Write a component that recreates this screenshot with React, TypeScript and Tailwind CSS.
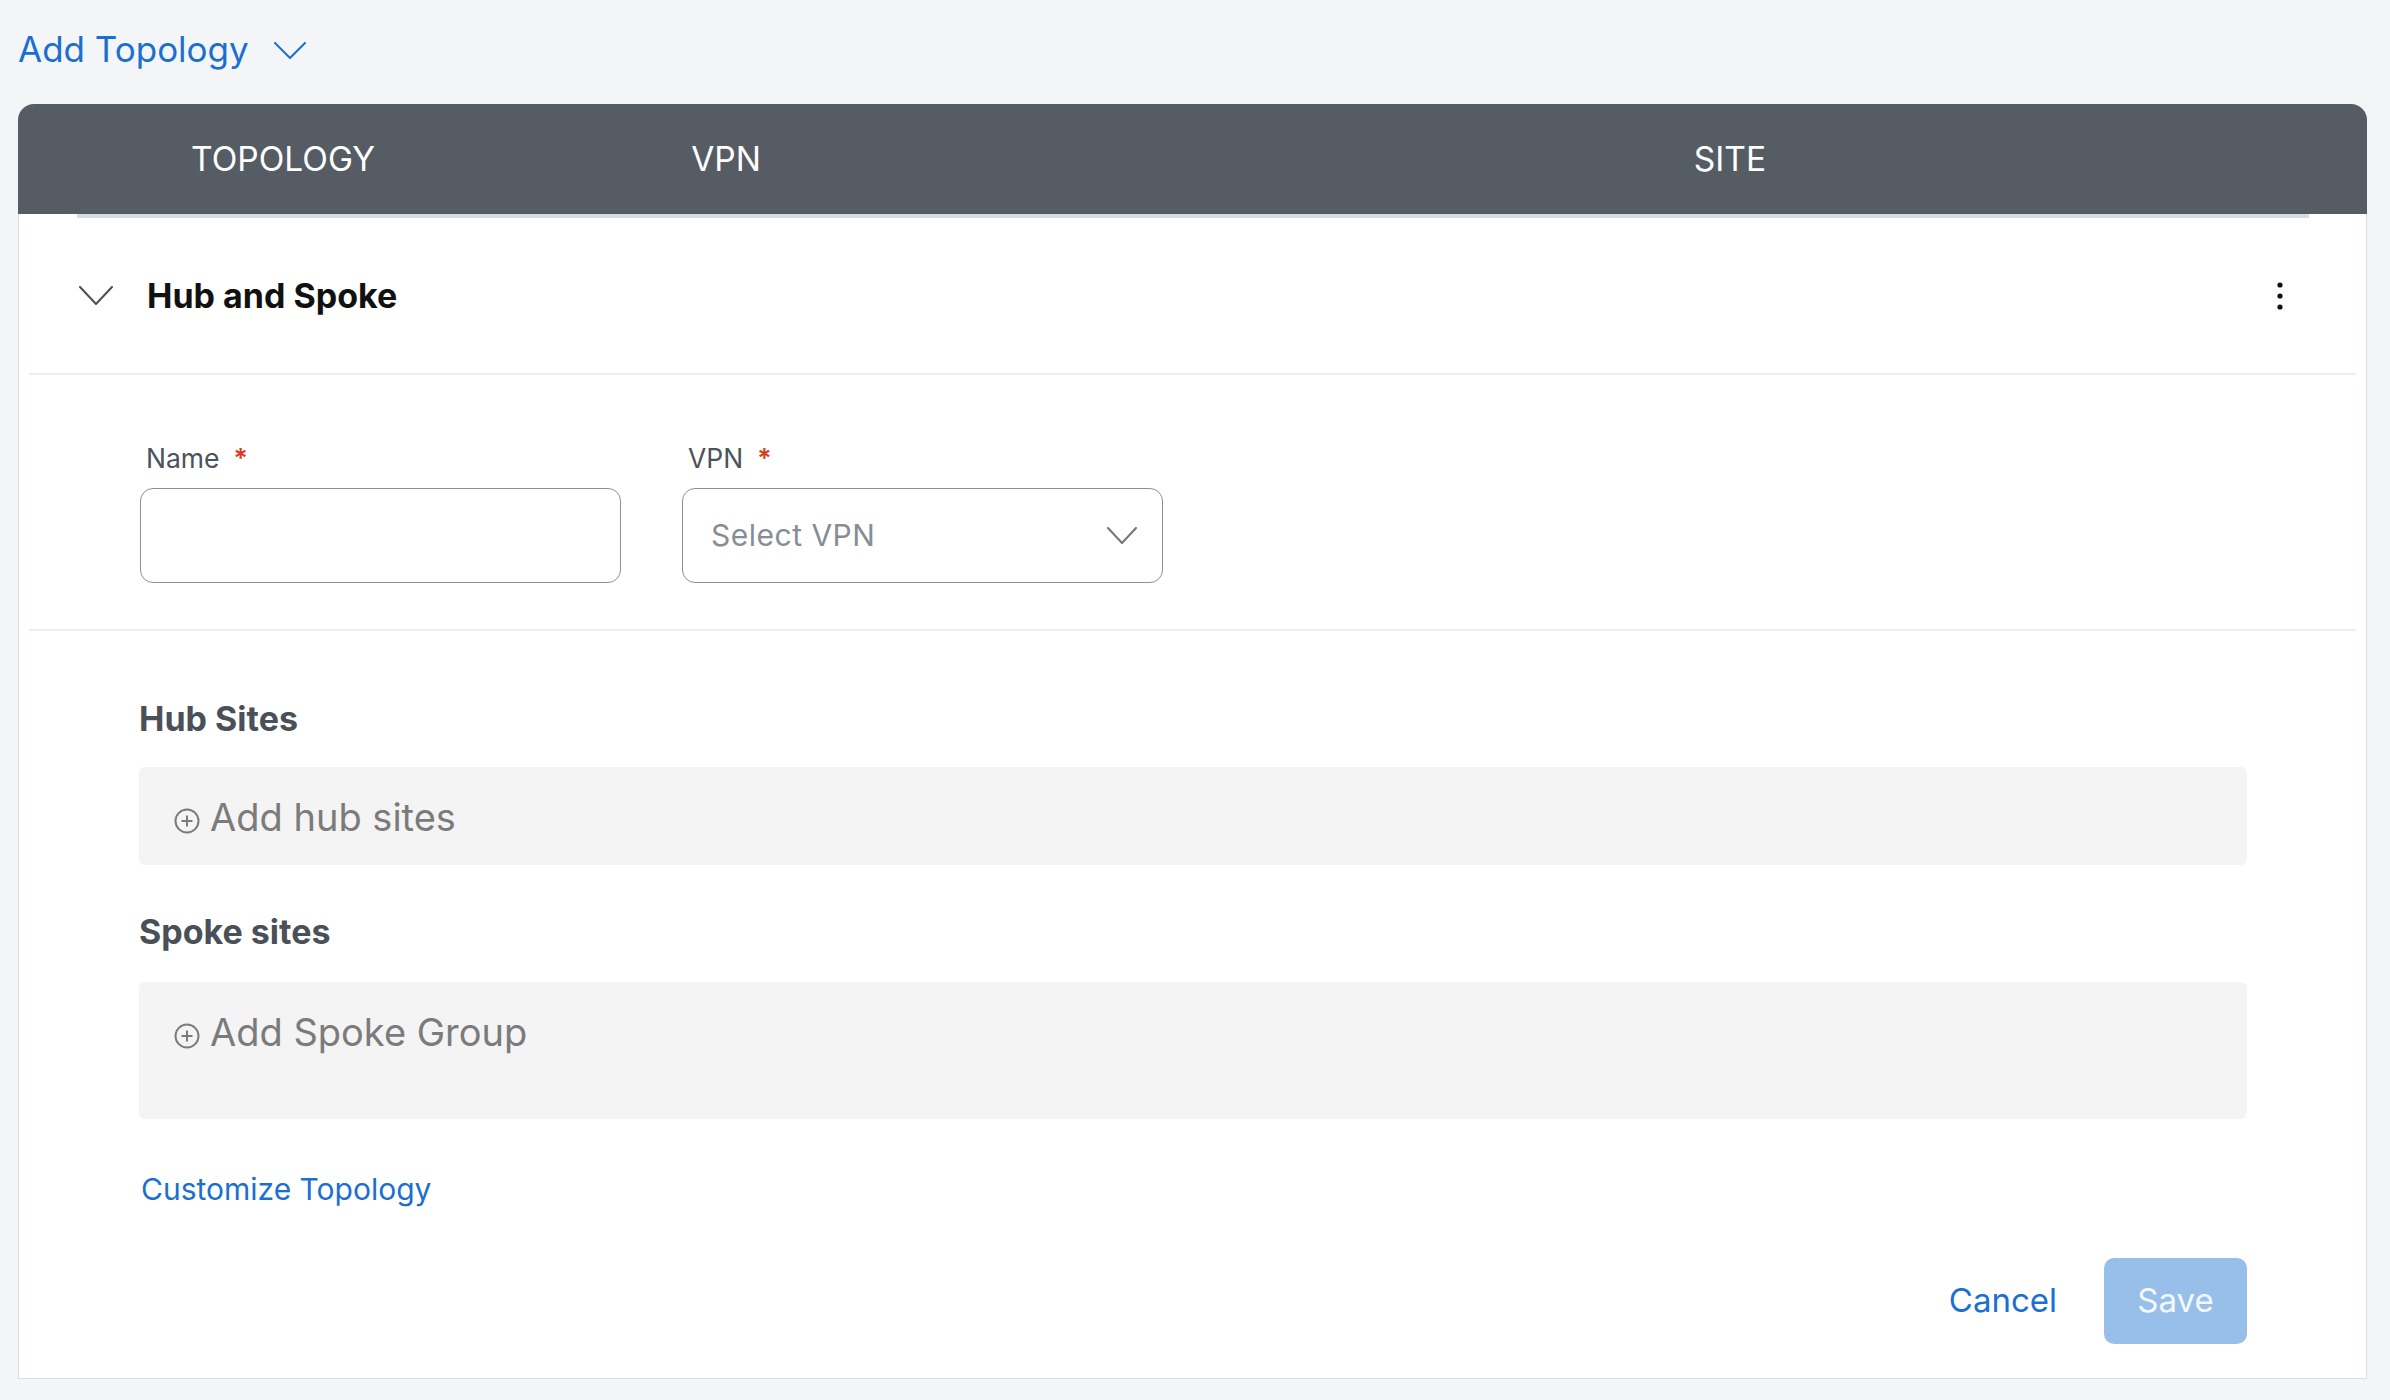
import React from "react";

const BLUE = "text-[#1b6fd0]";

function ChevronDown({ className, w, h }: { className?: string; w: number; h: number }) {
  return (
    <svg width={w} height={h} viewBox={`0 0 ${w} ${h}`} fill="none" className={className}>
      <path d={`M1 1 L${w / 2} ${h - 1} L${w - 1} 1`} stroke="currentColor" strokeWidth="2" strokeLinejoin="round" strokeLinecap="round" />
    </svg>
  );
}

function PlusCircle() {
  return (
    <svg width="26" height="26" viewBox="0 0 26 26" fill="none" className="text-[#7b7b7b] shrink-0 mt-[14px]">
      <circle cx="13" cy="13" r="11.5" stroke="currentColor" strokeWidth="2" />
      <path d="M13 7.5 V18.5 M7.5 13 H18.5" stroke="currentColor" strokeWidth="2" />
    </svg>
  );
}

function Kebab() {
  return (
    <svg width="6" height="28" viewBox="0 0 6 28" className="text-[#111]">
      <circle cx="3" cy="3" r="2.6" fill="currentColor" />
      <circle cx="3" cy="14" r="2.6" fill="currentColor" />
      <circle cx="3" cy="25" r="2.6" fill="currentColor" />
    </svg>
  );
}

function FieldLabel({ children }: { children: React.ReactNode }) {
  return (
    <div className="flex items-center gap-[14px] pl-[6px] h-[32px] text-[26.5px] leading-[32px] text-[#4b535c]">
      <span>{children}</span>
      <span className="text-[#d93a1a] font-semibold">*</span>
    </div>
  );
}

function AddBox({ label, tall }: { label: string; tall?: boolean }) {
  return (
    <div className={`rounded-[6px] bg-[#f4f4f4] pl-[35px] pt-[27px] ${tall ? "h-[137px]" : "h-[98px]"}`}>
      <div className="flex items-start gap-[10px]">
        <PlusCircle />
        <span className="text-[38px] leading-[46px] text-[#7b7b7b]">{label}</span>
      </div>
    </div>
  );
}

export default function App() {
  return (
    <div className="min-h-screen bg-[#f4f5f7] pl-[18px] pr-[23px] font-['Inter',sans-serif]">
      {/* Title */}
      <div className="h-[104px] pb-[5px] flex items-center gap-[25px]">
        <span className={`text-[35px] ${BLUE}`}>Add Topology</span>
        <ChevronDown w={32} h={17} className={`${BLUE} mt-[2px]`} />
      </div>

      {/* Card */}
      <div>
        <div className="h-[110px] rounded-t-[16px] bg-[#555c64] flex items-center text-white text-[33.5px]">
          <div className="w-[530px] text-center">TOPOLOGY</div>
          <div className="w-[356px] text-center">VPN</div>
          <div className="ml-[726px] w-[200px] text-center">SITE</div>
        </div>

        <div className="bg-white border-x border-b border-[#dcdde0]">
          <div className="ml-[58px] mr-[57px] h-[4px] bg-[#d6dce4]" />

          {/* Section header */}
          <div className="h-[155px] flex items-center pl-[60px] pr-[83px]">
            <ChevronDown w={34} h={19} className="text-[#4a4f55] mr-[34px]" />
            <span className="text-[34px] font-bold text-[#111]">Hub and Spoke</span>
            <div className="flex-1" />
            <Kebab />
          </div>
          <div className="mx-[10px] h-[2px] bg-[#eceef0]" />

          {/* Name / VPN */}
          <div className="flex gap-[61px] pl-[121px] pt-[67px] pb-[46px]">
            <div className="flex flex-col gap-[14px]">
              <FieldLabel>Name</FieldLabel>
              <div className="w-[481px] h-[95px] rounded-[13px] border-[1.5px] border-[#8a9299] bg-white" />
            </div>
            <div className="flex flex-col gap-[14px]">
              <FieldLabel>VPN</FieldLabel>
              <div className="w-[481px] h-[95px] rounded-[13px] border-[1.5px] border-[#8a9299] bg-white flex items-center pl-[28px] pr-[25px]">
                <span className="flex-1 text-[30px] tracking-[0.5px] text-[#878d94]">Select VPN</span>
                <ChevronDown w={30} h={17} className="text-[#6f767d]" />
              </div>
            </div>
          </div>
          <div className="mx-[10px] h-[2px] bg-[#eceef0]" />

          {/* Sites */}
          <div className="pl-[120px] pr-[119px] pt-[68px] pb-[34px]">
            <div className="text-[34px] leading-[40px] font-bold text-[#4a5058] mb-[28px]">Hub Sites</div>
            <AddBox label="Add hub sites" />
            <div className="text-[34px] leading-[40px] font-bold text-[#4a5058] mt-[47px] mb-[30px]">Spoke sites</div>
            <AddBox label="Add Spoke Group" tall />
            <div className={`mt-[52px] ml-[2px] text-[30px] leading-[36px] ${BLUE}`}>Customize Topology</div>

            <div className="mt-[51px] flex justify-end items-center gap-[47px]">
              <span className={`text-[33px] ${BLUE}`}>Cancel</span>
              <button className="w-[143px] h-[86px] rounded-[10px] bg-[#97bfe9] text-[33px] text-[#f3f8fe]">Save</button>
            </div>
          </div>
        </div>
      </div>
    </div>
  );
}
